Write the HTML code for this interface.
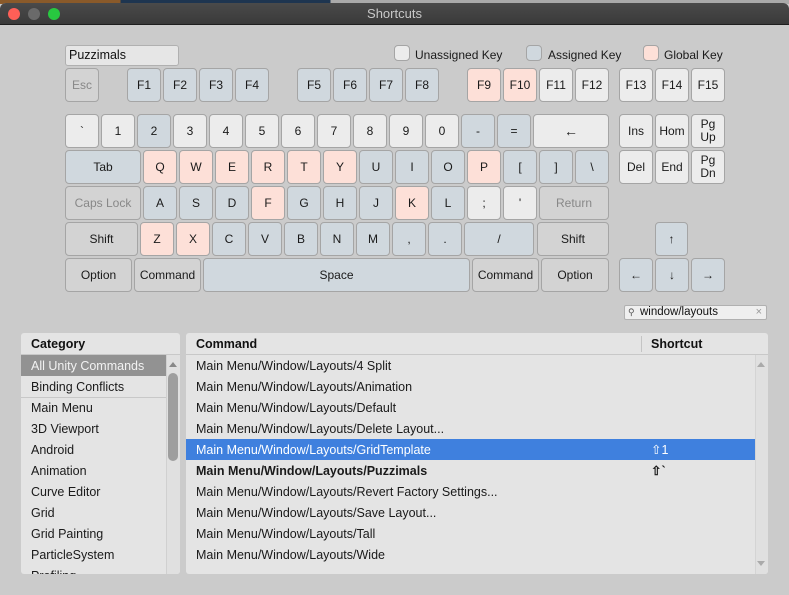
<!DOCTYPE html>
<html><head><meta charset="utf-8"><style>
*{margin:0;padding:0;box-sizing:border-box}
body{width:789px;height:595px;background:#cbcbcb;font-family:"Liberation Sans",sans-serif;position:relative;overflow:hidden}
.win{position:absolute;left:0;top:3px;width:789px;height:592px;background:#cbcbcb;border-radius:6px 6px 4px 4px;overflow:hidden}
.strip{position:absolute;left:0;top:0;width:789px;height:4px;background:linear-gradient(90deg,#8a5a2a 0,#8a5a2a 120px,#1e3550 121px,#1e3550 330px,#aaa 331px)}
.tb{position:absolute;left:0;top:0;width:789px;height:22px;background:linear-gradient(#4a4a4a,#3a3a3a);border-bottom:1px solid #1e1e1e;color:#c8c8c8;font-size:13px;text-align:center;line-height:22px}
.dot{position:absolute;top:5px;width:12px;height:12px;border-radius:50%}
.k{position:absolute;height:34px;border:1px solid #a5a5a5;border-radius:4px;font-size:12px;color:#1a1a1a;display:flex;align-items:center;justify-content:center;text-align:center;line-height:13px;background:#ececec}
.a{background:#d0d8de}.g{background:#fde0d8}.m{background:#d3d3d3}.d{background:#d3d3d3;color:#888}
.lg{position:absolute;top:45px;width:16px;height:16px;border:1px solid #a5a5a5;border-radius:4px}
.lt{position:absolute;top:48px;font-size:12px;color:#1a1a1a}
.panel{position:absolute;background:#e4e4e4;border-radius:3px;overflow:hidden}
.hdr{position:absolute;left:0;top:0;right:0;height:22px;border-bottom:1px solid #c8c8c8;font-weight:bold;font-size:12.5px;line-height:22px;color:#111}
.row{position:absolute;left:0;height:21px;line-height:22px;font-size:12.5px;color:#1a1a1a;padding-left:10px;white-space:nowrap}
</style></head><body>
<div class="strip"></div>
<div class="win">
<div class="tb">Shortcuts
<div class="dot" style="left:8px;background:#fe5f57"></div>
<div class="dot" style="left:28px;background:#6a6a6a"></div>
<div class="dot" style="left:48px;background:#28c840"></div>
</div>
<div style="position:absolute;top:-3px;left:0;width:789px;height:595px">
<div style="position:absolute;left:65px;top:45px;width:114px;height:21px;background:#e6e6e6;border:1px solid #b0b0b0;border-radius:3px;font-size:12.5px;line-height:19px;padding-left:3px;color:#111">Puzzimals</div>
<div class="lg" style="left:394px;background:#ececec"></div><div class="lt" style="left:415px">Unassigned Key</div>
<div class="lg" style="left:526px;background:#d0d8de"></div><div class="lt" style="left:548px">Assigned Key</div>
<div class="lg" style="left:643px;background:#fde0d8"></div><div class="lt" style="left:664px">Global Key</div>

<div class="k d" style="left:65px;top:68px;width:34px">Esc</div>
<div class="k a" style="left:127px;top:68px;width:34px">F1</div>
<div class="k a" style="left:163px;top:68px;width:34px">F2</div>
<div class="k a" style="left:199px;top:68px;width:34px">F3</div>
<div class="k a" style="left:235px;top:68px;width:34px">F4</div>
<div class="k a" style="left:297px;top:68px;width:34px">F5</div>
<div class="k a" style="left:333px;top:68px;width:34px">F6</div>
<div class="k a" style="left:369px;top:68px;width:34px">F7</div>
<div class="k a" style="left:405px;top:68px;width:34px">F8</div>
<div class="k g" style="left:467px;top:68px;width:34px">F9</div>
<div class="k g" style="left:503px;top:68px;width:34px">F10</div>
<div class="k" style="left:539px;top:68px;width:34px">F11</div>
<div class="k" style="left:575px;top:68px;width:34px">F12</div>
<div class="k" style="left:619px;top:68px;width:34px">F13</div>
<div class="k" style="left:655px;top:68px;width:34px">F14</div>
<div class="k" style="left:691px;top:68px;width:34px">F15</div>

<div class="k" style="left:65px;top:114px;width:34px">`</div>
<div class="k" style="left:101px;top:114px;width:34px">1</div>
<div class="k a" style="left:137px;top:114px;width:34px">2</div>
<div class="k" style="left:173px;top:114px;width:34px">3</div>
<div class="k" style="left:209px;top:114px;width:34px">4</div>
<div class="k" style="left:245px;top:114px;width:34px">5</div>
<div class="k" style="left:281px;top:114px;width:34px">6</div>
<div class="k" style="left:317px;top:114px;width:34px">7</div>
<div class="k" style="left:353px;top:114px;width:34px">8</div>
<div class="k" style="left:389px;top:114px;width:34px">9</div>
<div class="k" style="left:425px;top:114px;width:34px">0</div>
<div class="k a" style="left:461px;top:114px;width:34px">-</div>
<div class="k a" style="left:497px;top:114px;width:34px">=</div>
<div class="k" style="left:533px;top:114px;width:76px;font-size:14px">←</div>
<div class="k" style="left:619px;top:114px;width:34px">Ins</div>
<div class="k" style="left:655px;top:114px;width:34px">Hom</div>
<div class="k" style="left:691px;top:114px;width:34px">Pg<br>Up</div>

<div class="k a" style="left:65px;top:150px;width:76px">Tab</div>
<div class="k g" style="left:143px;top:150px;width:34px">Q</div>
<div class="k g" style="left:179px;top:150px;width:34px">W</div>
<div class="k g" style="left:215px;top:150px;width:34px">E</div>
<div class="k g" style="left:251px;top:150px;width:34px">R</div>
<div class="k g" style="left:287px;top:150px;width:34px">T</div>
<div class="k g" style="left:323px;top:150px;width:34px">Y</div>
<div class="k a" style="left:359px;top:150px;width:34px">U</div>
<div class="k a" style="left:395px;top:150px;width:34px">I</div>
<div class="k a" style="left:431px;top:150px;width:34px">O</div>
<div class="k g" style="left:467px;top:150px;width:34px">P</div>
<div class="k a" style="left:503px;top:150px;width:34px">[</div>
<div class="k a" style="left:539px;top:150px;width:34px">]</div>
<div class="k a" style="left:575px;top:150px;width:34px">\</div>
<div class="k" style="left:619px;top:150px;width:34px">Del</div>
<div class="k" style="left:655px;top:150px;width:34px">End</div>
<div class="k" style="left:691px;top:150px;width:34px">Pg<br>Dn</div>

<div class="k d" style="left:65px;top:186px;width:76px">Caps Lock</div>
<div class="k a" style="left:143px;top:186px;width:34px">A</div>
<div class="k a" style="left:179px;top:186px;width:34px">S</div>
<div class="k a" style="left:215px;top:186px;width:34px">D</div>
<div class="k g" style="left:251px;top:186px;width:34px">F</div>
<div class="k a" style="left:287px;top:186px;width:34px">G</div>
<div class="k a" style="left:323px;top:186px;width:34px">H</div>
<div class="k a" style="left:359px;top:186px;width:34px">J</div>
<div class="k g" style="left:395px;top:186px;width:34px">K</div>
<div class="k a" style="left:431px;top:186px;width:34px">L</div>
<div class="k" style="left:467px;top:186px;width:34px">;</div>
<div class="k" style="left:503px;top:186px;width:34px">'</div>
<div class="k d" style="left:539px;top:186px;width:70px">Return</div>

<div class="k m" style="left:65px;top:222px;width:73px">Shift</div>
<div class="k g" style="left:140px;top:222px;width:34px">Z</div>
<div class="k g" style="left:176px;top:222px;width:34px">X</div>
<div class="k a" style="left:212px;top:222px;width:34px">C</div>
<div class="k a" style="left:248px;top:222px;width:34px">V</div>
<div class="k a" style="left:284px;top:222px;width:34px">B</div>
<div class="k a" style="left:320px;top:222px;width:34px">N</div>
<div class="k a" style="left:356px;top:222px;width:34px">M</div>
<div class="k a" style="left:392px;top:222px;width:34px">,</div>
<div class="k a" style="left:428px;top:222px;width:34px">.</div>
<div class="k a" style="left:464px;top:222px;width:70px">/</div>
<div class="k m" style="left:537px;top:222px;width:72px">Shift</div>
<div class="k a" style="left:655px;top:222px;width:33px">↑</div>

<div class="k m" style="left:65px;top:258px;width:67px">Option</div>
<div class="k m" style="left:134px;top:258px;width:67px">Command</div>
<div class="k a" style="left:203px;top:258px;width:267px">Space</div>
<div class="k m" style="left:472px;top:258px;width:67px">Command</div>
<div class="k m" style="left:541px;top:258px;width:68px">Option</div>
<div class="k a" style="left:619px;top:258px;width:34px">←</div>
<div class="k a" style="left:655px;top:258px;width:34px">↓</div>
<div class="k a" style="left:691px;top:258px;width:34px">→</div>

<div style="position:absolute;left:624px;top:305px;width:143px;height:15px;background:#efefef;border:1px solid #b0b0b0;border-radius:2px;font-size:11.5px;line-height:13px;color:#111;padding-left:15px">window/layouts
<span style="position:absolute;left:3px;top:0;font-size:9px;color:#555">⚲</span>
<span style="position:absolute;right:4px;top:0;color:#999;font-size:11px">×</span></div>

<div class="panel" style="left:21px;top:333px;width:159px;height:241px">
<div class="hdr" style="padding-left:10px">Category</div>
<div class="row" style="top:22px;width:145px;background:#929292;color:#f2f2f2">All Unity Commands</div>
<div class="row" style="top:43px">Binding Conflicts</div>
<div style="position:absolute;left:0;top:64px;width:145px;height:1px;background:#c8c8c8"></div>
<div class="row" style="top:64px">Main Menu</div>
<div class="row" style="top:85px">3D Viewport</div>
<div class="row" style="top:106px">Android</div>
<div class="row" style="top:127px">Animation</div>
<div class="row" style="top:148px">Curve Editor</div>
<div class="row" style="top:169px">Grid</div>
<div class="row" style="top:190px">Grid Painting</div>
<div class="row" style="top:211px">ParticleSystem</div>
<div class="row" style="top:232px">Profiling</div>
<div style="position:absolute;left:145px;top:22px;width:14px;height:219px;background:#e0e0e0;border-left:1px solid #d0d0d0"></div>
<div style="position:absolute;left:148px;top:29px;width:0;height:0;border:4px solid transparent;border-bottom:5px solid #888;border-top:0"></div>
<div style="position:absolute;left:147px;top:40px;width:10px;height:88px;background:#9e9e9e;border-radius:5px"></div>
<div style="position:absolute;left:148px;top:262px;width:0;height:0;border:4px solid transparent;border-top:5px solid #888;border-bottom:0"></div>
</div>

<div class="panel" style="left:186px;top:333px;width:582px;height:241px">
<div class="hdr" style="padding-left:10px">Command<span style="position:absolute;left:465px">Shortcut</span></div>
<div style="position:absolute;left:455px;top:3px;width:1px;height:16px;background:#c4c4c4"></div>
<div class="row" style="top:22px">Main Menu/Window/Layouts/4 Split</div>
<div class="row" style="top:43px">Main Menu/Window/Layouts/Animation</div>
<div class="row" style="top:64px">Main Menu/Window/Layouts/Default</div>
<div class="row" style="top:85px">Main Menu/Window/Layouts/Delete Layout...</div>
<div class="row" style="top:106px;width:569px;background:#3f80de;color:#fff">Main Menu/Window/Layouts/GridTemplate<span style="position:absolute;left:465px">⇧1</span></div>
<div class="row" style="top:127px;font-weight:bold;width:569px">Main Menu/Window/Layouts/Puzzimals<span style="position:absolute;left:465px">⇧`</span></div>
<div class="row" style="top:148px">Main Menu/Window/Layouts/Revert Factory Settings...</div>
<div class="row" style="top:169px">Main Menu/Window/Layouts/Save Layout...</div>
<div class="row" style="top:190px">Main Menu/Window/Layouts/Tall</div>
<div class="row" style="top:211px">Main Menu/Window/Layouts/Wide</div>
<div style="position:absolute;left:569px;top:22px;width:13px;height:219px;background:#e0e0e0;border-left:1px solid #d4d4d4"></div>
<div style="position:absolute;left:571px;top:29px;width:0;height:0;border:4px solid transparent;border-bottom:5px solid #aaa;border-top:0"></div>
<div style="position:absolute;left:571px;top:228px;width:0;height:0;border:4px solid transparent;border-top:5px solid #aaa;border-bottom:0"></div>
</div>
</div>
</div>
</body></html>
